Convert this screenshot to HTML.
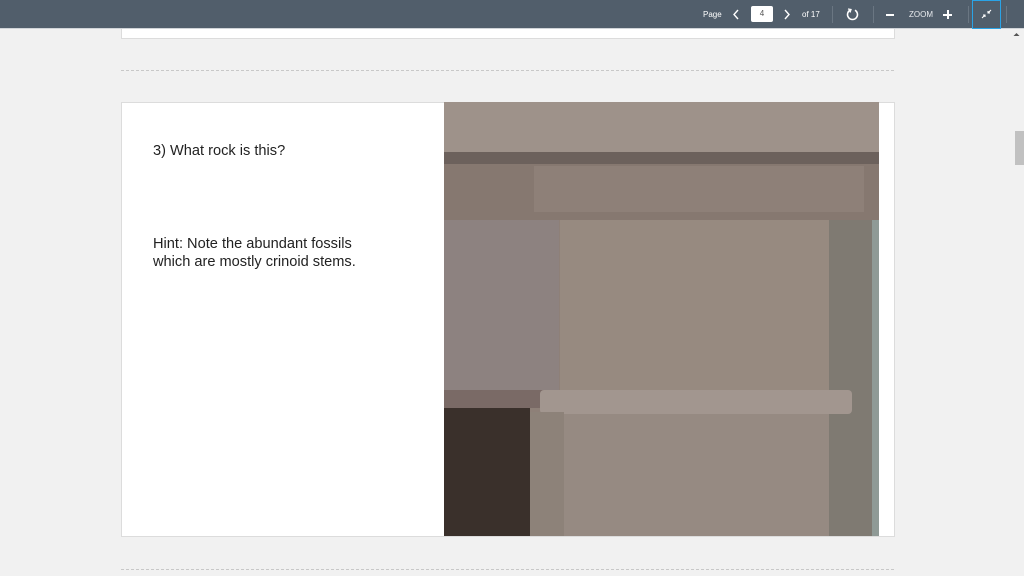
<!DOCTYPE html>
<html><head><meta charset="utf-8"><style>
*{margin:0;padding:0;box-sizing:border-box}
body{width:1024px;height:576px;overflow:hidden;background:#f1f1f1;position:relative;font-family:"Liberation Sans",sans-serif}
.tb{position:absolute;left:0;top:0;width:1024px;height:29px;background:#515e6b;border-bottom:1px solid #d0d4d8;z-index:5}
.t{position:absolute;color:#fff;font-size:8px;top:10px}
.sep{position:absolute;top:6px;width:1px;height:17px;background:#6a7682}
.pg{position:absolute;background:#fff;border:1px solid #dcdcdc}
.dot{position:absolute;left:121px;width:773px;border-top:1px dashed #c8c8c8}
.r{position:absolute}
</style></head><body>
<div class="tb">
 <div class="t" style="left:703px">Page</div>
 <svg class="r" style="left:731px;top:8px" width="10" height="13"><path d="M7 2 L3 6.5 L7 11" stroke="#fff" stroke-width="1.4" fill="none"/></svg>
 <div class="r" style="left:751px;top:6px;width:22px;height:16px;background:#fff;border-radius:2px;font-size:8px;color:#555;text-align:center;line-height:16px">4</div>
 <svg class="r" style="left:782px;top:8px" width="10" height="13"><path d="M3 2 L7 6.5 L3 11" stroke="#fff" stroke-width="1.4" fill="none"/></svg>
 <div class="t" style="left:802px">of 17</div>
 <div class="sep" style="left:832px"></div>
 <svg class="r" style="left:845px;top:7px" width="15" height="15"><path d="M5 3.2 A5 5 0 1 0 10 3.2" stroke="#fff" stroke-width="1.5" fill="none"/><path d="M3 2 L6 2.5 L5 5.5" stroke="#fff" stroke-width="1.3" fill="none"/></svg>
 <div class="sep" style="left:873px"></div>
 <div class="r" style="left:886px;top:14px;width:8px;height:1.5px;background:#fff"></div>
 <div class="t" style="left:909px;color:#e8ebee">ZOOM</div>
 <div class="r" style="left:943px;top:14px;width:9px;height:1.5px;background:#fff"></div>
 <div class="r" style="left:947px;top:10px;width:1.5px;height:9px;background:#fff"></div>
 <div class="sep" style="left:968px"></div>
 <div class="r" style="left:972px;top:0;width:29px;height:29px;border:1px solid #2aa3e6"></div>
 <svg class="r" style="left:980px;top:8px" width="13" height="12"><path d="M2 10 L5 7 M3 7 L5 7 L5 9 M11 2 L8 5 M8 3 L8 5 L10 5" stroke="#fff" stroke-width="1.1" fill="none"/></svg>
 <div class="sep" style="left:1006px"></div>
</div>
<div class="pg" style="left:121px;top:20px;width:774px;height:19px;border-top:none"></div>
<div class="dot" style="top:70px"></div>
<div class="pg" style="left:121px;top:102px;width:774px;height:435px"></div>
<div class="r" style="left:153px;top:142px;font-size:14.6px;color:#222;line-height:18px;white-space:nowrap">3) What rock is this?</div>
<div class="r" style="left:153px;top:235px;font-size:14.6px;color:#222;line-height:18px;white-space:nowrap">Hint: Note the abundant fossils<br>which are mostly crinoid stems.</div>
<div class="r" style="left:444px;top:102px;width:435px;height:434px;overflow:hidden;background:#8e8078">
 <div class="r" style="left:0;top:0;width:435px;height:50px;background:#9e928a"></div>
 <div class="r" style="left:0;top:50px;width:435px;height:12px;background:#6c615c"></div>
 <div class="r" style="left:0;top:62px;width:435px;height:56px;background:#867870"></div>
 <div class="r" style="left:90px;top:64px;width:330px;height:46px;background:#8e8078"></div>
 <div class="r" style="left:0;top:118px;width:115px;height:172px;background:#8d8280"></div>
 <div class="r" style="left:116px;top:118px;width:269px;height:172px;background:#978a80"></div>
 <div class="r" style="left:385px;top:118px;width:45px;height:316px;background:#7f7a72"></div>
 <div class="r" style="left:428px;top:118px;width:7px;height:316px;background:#8f9a96"></div>
 <div class="r" style="left:0;top:288px;width:100px;height:18px;background:#7a6a66"></div>
 <div class="r" style="left:96px;top:288px;width:312px;height:24px;background:#a2968f;border-radius:4px"></div>
 <div class="r" style="left:0;top:306px;width:86px;height:128px;background:#3a302b"></div>
 <div class="r" style="left:86px;top:310px;width:34px;height:124px;background:#8d8279"></div>
 <div class="r" style="left:120px;top:312px;width:265px;height:122px;background:#968a82"></div>
</div>
<div class="dot" style="top:569px"></div>
<div class="r" style="left:1008px;top:29px;width:16px;height:547px;background:#f1f1f1"></div>
<svg class="r" style="left:1013px;top:32px" width="7" height="5"><path d="M0.5 4 L3.5 1 L6.5 4Z" fill="#555"/></svg>
<div class="r" style="left:1015px;top:131px;width:9px;height:34px;background:#c1c1c1"></div>
</body></html>
